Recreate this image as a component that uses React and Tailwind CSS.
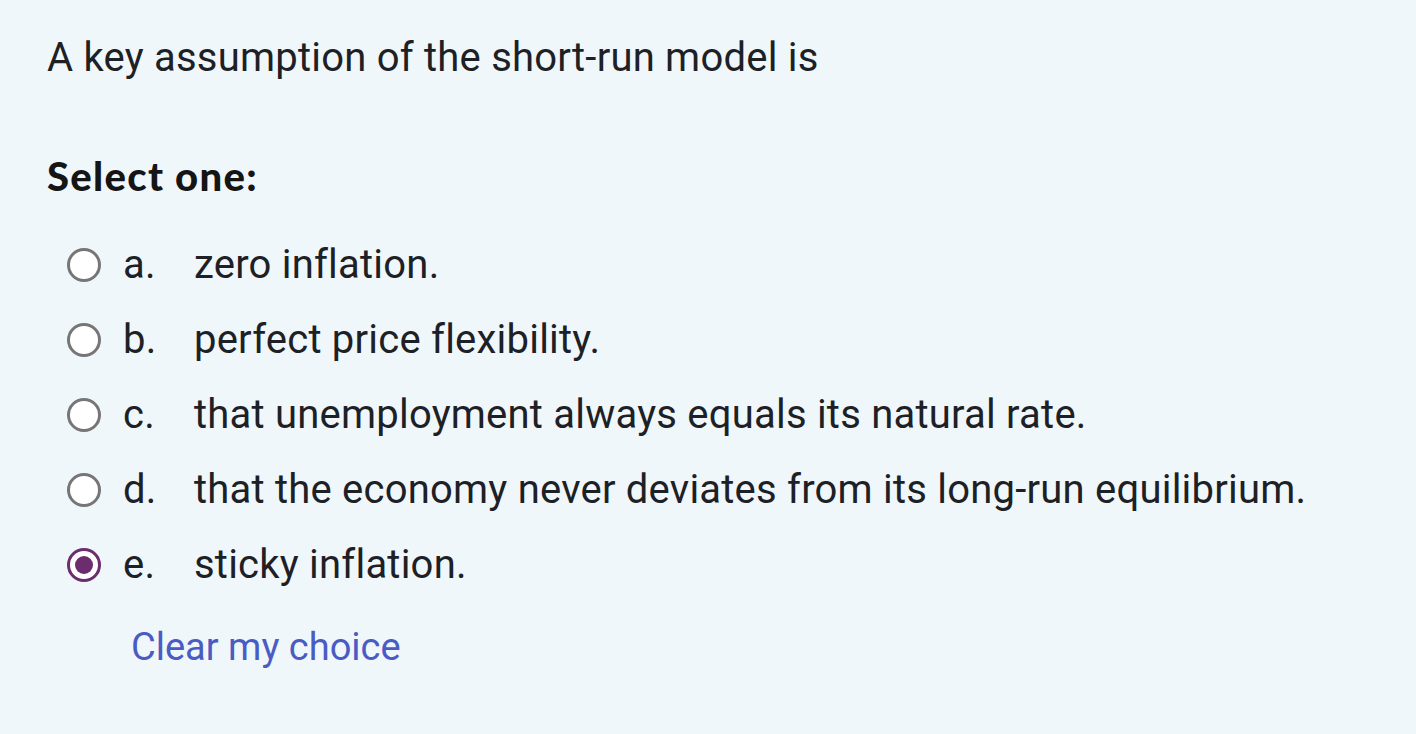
import React, { useState } from 'react';

const options = [
    { key: 'a', label: 'zero inflation.' },
    { key: 'b', label: 'perfect price flexibility.' },
    { key: 'c', label: 'that unemployment always equals its natural rate.' },
    { key: 'd', label: 'that the economy never deviates from its long-run equilibrium.' },
    { key: 'e', label: 'sticky inflation.' },
];

const Radio = ({ checked }) => (
    <span
        className={`w-[34px] h-[34px] rounded-full flex items-center justify-center shrink-0 bg-white border-[3px] ${checked ? 'border-[#6b2d6e]' : 'border-[#767676]'}`}
    >
        {checked && <span className="w-[18px] h-[18px] rounded-full bg-[#6b2d6e]" />}
    </span>
);

const App = () => {
    const [selected, setSelected] = useState('e');

    return (
        <div className="w-[1416px] h-[734px] bg-[#f0f7fb] text-[#1d2125] font-['Roboto',sans-serif] tracking-[0.22px] pt-[30px] pl-[47px]">
            {/* Question */}
            <p className="text-[40px] leading-[56px]">A key assumption of the short-run model is</p>

            <p className="mt-[62px] text-[40px] leading-[56px] font-black font-['Lato',sans-serif] tracking-[1.3px] text-[#151515]">Select one:</p>

            {/* Answers */}
            <div className="mt-[23px] flex flex-col">
                {options.map((opt) => (
                    <label
                        key={opt.key}
                        className="h-[75px] flex items-center pl-[20px] cursor-pointer"
                        onClick={() => setSelected(opt.key)}
                    >
                        <Radio checked={selected === opt.key} />
                        <span className="ml-[22px] w-[71px] text-[40px] leading-[56px]">{opt.key}.</span>
                        <span className="text-[40px] leading-[56px]">{opt.label}</span>
                    </label>
                ))}
            </div>

            <button
                className="mt-[17px] ml-[84px] text-[38px] leading-[56px] tracking-normal text-[#4a5cc4]"
                onClick={() => setSelected(null)}
            >
                Clear my choice
            </button>
        </div>
    );
};

export default App;
